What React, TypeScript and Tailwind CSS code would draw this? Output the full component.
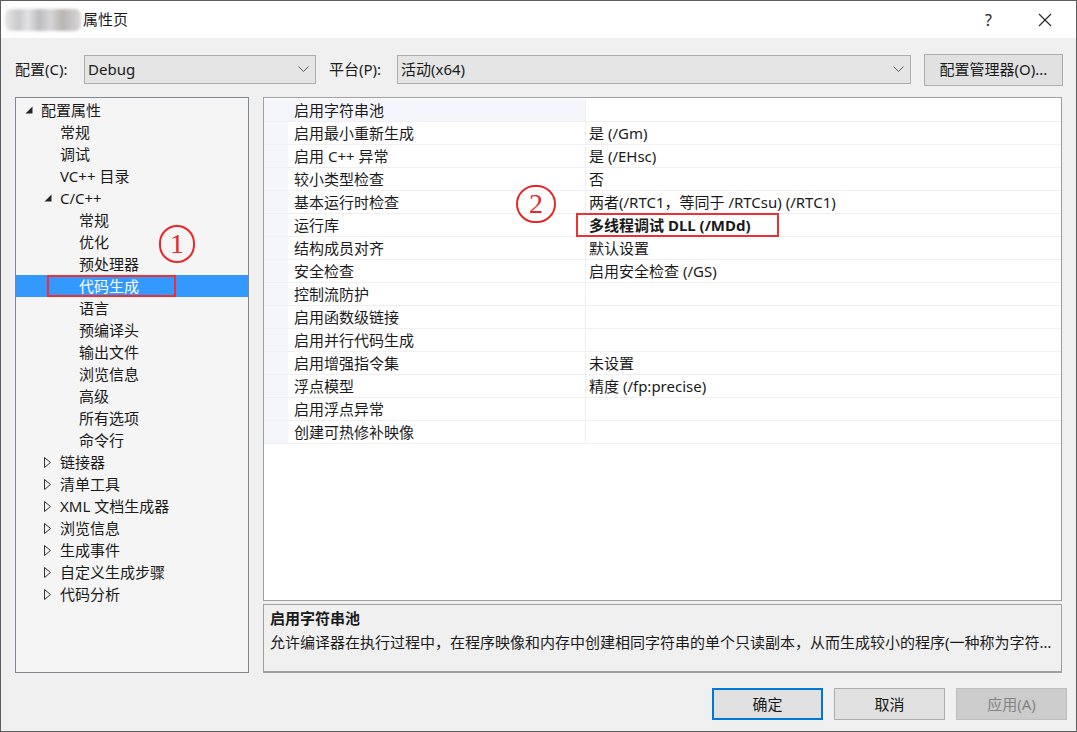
const treeItems: { level: number; text: string; expander?: "open" | "closed"; selected?: boolean }[] = [
  { level: 0, text: "配置属性", expander: "open" },
  { level: 1, text: "常规" },
  { level: 1, text: "调试" },
  { level: 1, text: "VC++ 目录" },
  { level: 1, text: "C/C++", expander: "open" },
  { level: 2, text: "常规" },
  { level: 2, text: "优化" },
  { level: 2, text: "预处理器" },
  { level: 2, text: "代码生成", selected: true },
  { level: 2, text: "语言" },
  { level: 2, text: "预编译头" },
  { level: 2, text: "输出文件" },
  { level: 2, text: "浏览信息" },
  { level: 2, text: "高级" },
  { level: 2, text: "所有选项" },
  { level: 2, text: "命令行" },
  { level: 1, text: "链接器", expander: "closed" },
  { level: 1, text: "清单工具", expander: "closed" },
  { level: 1, text: "XML 文档生成器", expander: "closed" },
  { level: 1, text: "浏览信息", expander: "closed" },
  { level: 1, text: "生成事件", expander: "closed" },
  { level: 1, text: "自定义生成步骤", expander: "closed" },
  { level: 1, text: "代码分析", expander: "closed" },
];

const levelPad = ["pl-[9px]", "pl-[28px]", "pl-[47px]"];

const props: { name: string; value: string; bold?: boolean }[] = [
  { name: "启用字符串池", value: "" },
  { name: "启用最小重新生成", value: "是 (/Gm)" },
  { name: "启用 C++ 异常", value: "是 (/EHsc)" },
  { name: "较小类型检查", value: "否" },
  { name: "基本运行时检查", value: "两者(/RTC1，等同于 /RTCsu) (/RTC1)" },
  { name: "运行库", value: "多线程调试 DLL (/MDd)", bold: true },
  { name: "结构成员对齐", value: "默认设置" },
  { name: "安全检查", value: "启用安全检查 (/GS)" },
  { name: "控制流防护", value: "" },
  { name: "启用函数级链接", value: "" },
  { name: "启用并行代码生成", value: "" },
  { name: "启用增强指令集", value: "未设置" },
  { name: "浮点模型", value: "精度 (/fp:precise)" },
  { name: "启用浮点异常", value: "" },
  { name: "创建可热修补映像", value: "" },
];

const Chevron = () => (
  <svg width="11" height="7" viewBox="0 0 11 7" className="mr-[6px]">
    <path d="M0.5 0.5 L5.5 5.5 L10.5 0.5" fill="none" stroke="#5a5a5a" strokeWidth="1" />
  </svg>
);

const Expander = ({ kind }: { kind?: "open" | "closed" }) => (
  <span className="w-[16px] h-[22px] flex items-center shrink-0">
    {kind === "open" && (
      <svg width="8" height="8" viewBox="0 0 8 8">
        <path d="M7.5 0.5 L7.5 7.5 L0.5 7.5 Z" fill="#262626" />
      </svg>
    )}
    {kind === "closed" && (
      <svg width="7" height="11" viewBox="0 0 7 11">
        <path d="M0.5 0.5 L6.5 5.5 L0.5 10.5 Z" fill="none" stroke="#333" strokeWidth="1" />
      </svg>
    )}
  </span>
);

export default function App() {
  return (
    <div className="relative w-[1077px] h-[732px] overflow-hidden border border-[#5c5c5c] bg-[#f0f0f0] text-[15px] text-[#1a1a1a] font-['Noto_Sans','Noto_Sans_CJK_SC',sans-serif] flex flex-col">
      {/* title bar */}
      <div className="h-[37px] bg-white flex items-center shrink-0">
        <div className="ml-[4px] w-[76px] h-[22px] rounded-[6px] blur-[1.5px] bg-[linear-gradient(90deg,#e8e8ea_0%,#c9c9cc_18%,#e2e2e4_30%,#bcbcc0_45%,#d6d6d8_60%,#b8b4b0_75%,#d8d8da_100%)]" />
        <span className="ml-[2px]">属性页</span>
        <span className="ml-auto mr-[46px] text-[16px] text-[#222]">?</span>
        <svg width="14" height="14" viewBox="0 0 14 14" className="mr-[24px]">
          <path d="M1 1 L13 13 M13 1 L1 13" stroke="#222" strokeWidth="1.1" />
        </svg>
      </div>

      {/* config row */}
      <div className="h-[59px] flex items-center pt-[4px] pl-[14px] pr-[15px] shrink-0">
        <span className="w-[69px] shrink-0">配置(C):</span>
        <div className="w-[232px] h-[29px] shrink-0 border border-[#adadad] bg-[#e5e5e5] flex items-center pl-[3px]">
          <span className="flex-1">Debug</span>
          <Chevron />
        </div>
        <span className="ml-[13px] w-[68px] shrink-0">平台(P):</span>
        <div className="w-[514px] h-[29px] shrink-0 border border-[#adadad] bg-[#e5e5e5] flex items-center pl-[3px]">
          <span className="flex-1">活动(x64)</span>
          <Chevron />
        </div>
        <div className="ml-[13px] w-[139px] h-[32px] shrink-0 border border-[#adadad] bg-[#e1e1e1] flex items-center justify-center">
          配置管理器(O)...
        </div>
      </div>

      {/* main */}
      <div className="flex pl-[14px] pr-[14px] gap-[14px] h-[576px] shrink-0">
        {/* tree */}
        <div className="w-[234px] shrink-0 h-full border border-[#828790] bg-[#f5f5f5] pt-[1px]">
          {treeItems.map((it, i) => (
            <div
              key={i}
              className={`relative h-[22px] flex items-center whitespace-nowrap ${levelPad[it.level]} ${it.selected ? "bg-[#3399ff] text-white" : ""}`}
            >
              <Expander kind={it.expander} />
              <span>{it.text}</span>
              {it.selected && (
                <div className="absolute left-[31px] top-0 w-[129px] h-[22px] border-2 border-[#ef2f33]" />
              )}
            </div>
          ))}
        </div>

        {/* grid + description */}
        <div className="flex-1 min-w-0 flex flex-col gap-[3px]">
          <div className="h-[504px] border border-[#a0a0a0] bg-white pt-[1px] flex flex-col">
            {props.map((p, i) => (
              <div key={i} className="h-[23px] flex border-b border-[#f0f0f0]">
                <div className="w-[24px] shrink-0 bg-[#f5f6fb]" />
                <div className={`w-[298px] shrink-0 pl-[6px] flex items-center border-r border-[#f0f0f0] ${i === 0 ? "bg-[#f5f6fb]" : ""}`}>
                  {p.name}
                </div>
                <div className={`relative flex-1 pl-[3px] flex items-center whitespace-nowrap ${p.bold ? "font-bold" : ""}`}>
                  {p.value}
                  {p.bold && (
                    <div className="absolute left-[-10px] top-[-1px] w-[203px] h-[24px] border-2 border-[#ef2f33]" />
                  )}
                </div>
              </div>
            ))}
            <div className="flex-1" />
          </div>
          <div className="h-[69px] border border-[#a0a0a0] border-b-2 bg-[#f0f0f0] pl-[6px] pr-[8px] pt-[1px]">
            <div className="font-bold h-[24px] leading-[24px]">启用字符串池</div>
            <div className="h-[24px] leading-[24px] truncate">
              允许编译器在执行过程中，在程序映像和内存中创建相同字符串的单个只读副本，从而生成较小的程序(一种称为字符串池的优化)。
            </div>
          </div>
        </div>
      </div>

      {/* buttons */}
      <div className="flex justify-end gap-[11px] pr-[9px] pt-[15px]">
        <div className="w-[111px] h-[32px] border-2 border-[#0078d7] bg-[#e1e1e1] flex items-center justify-center">确定</div>
        <div className="w-[111px] h-[32px] border border-[#adadad] bg-[#e1e1e1] flex items-center justify-center">取消</div>
        <div className="w-[111px] h-[32px] border border-[#bfbfbf] bg-[#cccccc] text-[#838383] flex items-center justify-center">应用(A)</div>
      </div>

      {/* annotations */}
      <div className="absolute left-[158px] top-[224px] w-[36px] h-[38px] rounded-full border-2 border-[#e8262b] flex items-center justify-center text-[#e8262b] text-[28px] font-['Liberation_Serif',serif]">
        1
      </div>
      <div className="absolute left-[515px] top-[184px] w-[40px] h-[38px] rounded-full border-2 border-[#e8262b] flex items-center justify-center text-[#e8262b] text-[28px] font-['Liberation_Serif',serif]">
        2
      </div>
    </div>
  );
}
